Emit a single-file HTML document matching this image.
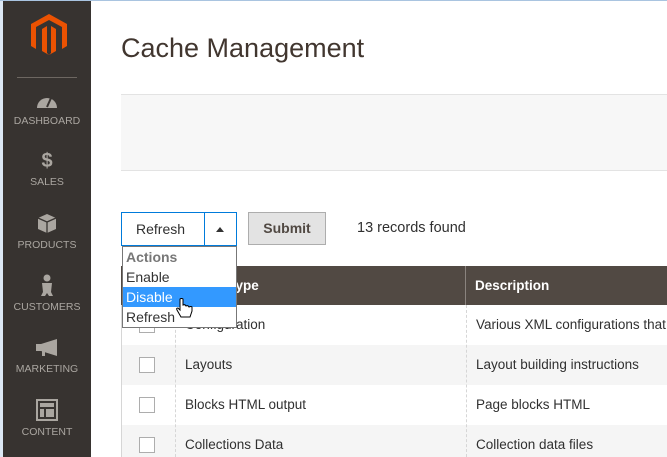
<!DOCTYPE html>
<html><head><meta charset="utf-8"><style>
*{margin:0;padding:0;box-sizing:border-box}
body{width:667px;height:457px;overflow:hidden;background:#fff;font-family:"Liberation Sans",sans-serif;position:relative}
.tl{position:absolute;left:0;top:0;width:667px;height:1px;background:#a9c4e0}
.lb{position:absolute;left:0;top:0;width:3px;height:457px;background:#dce8f4}
.sb{position:absolute;left:3px;top:0;width:88px;height:457px;background:#373330}
.it{position:absolute;left:0;width:88px;text-align:center;color:#aaa6a0;font-size:10.5px}
.it svg{display:block;margin:0 auto}
.t{position:absolute;left:121px;top:33px;font-size:27px;color:#41362f}
.band{position:absolute;left:121px;top:94px;width:546px;height:77px;background:#f7f7f7;border-top:1px solid #e3e3e3;border-bottom:1px solid #e3e3e3}
.sel{position:absolute;left:121px;top:212px;width:116px;height:34px;border:1px solid #007bdb;background:#fff}
.sel span{position:absolute;left:14px;top:8px;font-size:14px;color:#303030}
.sel i{position:absolute;left:82px;top:0;width:1px;height:32px;background:#007bdb}
.sel b{position:absolute;left:94px;top:14px;border:4px solid transparent;border-bottom:5px solid #333;border-top:0}
.btn{position:absolute;left:248px;top:212px;width:78px;height:33px;background:#e3e3e3;border:1px solid #adadad;font-size:14px;font-weight:bold;color:#514943;text-align:center;line-height:31px}
.rec{position:absolute;left:357px;top:220px;font-size:14.5px;color:#303030}
.th{position:absolute;left:121px;top:266px;width:546px;height:39px;background:#514943;color:#fff;font-weight:bold;font-size:13.5px}
.row{position:absolute;left:121px;width:546px;height:40px;font-size:13.5px;color:#303030;border-left:1px solid #d6d6d6}
.row .c{position:absolute;left:17px;top:12px;width:16px;height:16px;border:1px solid #adadad;background:#fff}
.row .a{position:absolute;left:63px;top:12px}
.row .d{position:absolute;left:354px;top:12px;white-space:nowrap}
.vd{position:absolute;left:175px;top:305px;height:152px;border-left:1px dashed #d6d6d6}
.vd2{position:absolute;left:466px;top:305px;height:152px;border-left:1px dashed #d6d6d6}
.dd{position:absolute;left:122px;top:246px;width:115px;height:82px;background:#fff;border:1px solid #777;font-size:14px;color:#333}
.dd div{height:20px;line-height:20px;padding-left:3px}
</style></head><body>
<div class="lb"></div>
<div class="sb">
 <svg style="position:absolute;left:28px;top:14px" width="36" height="42" viewBox="0 0 36 42"><path d="M18 0 L36 10 V32 L31 35 V13 L18 6 L5 13 V35 L0 32 V10 Z" fill="#eb5202"/><path d="M11 15 L16 12 V39 L18 41 L20 39 V12 L25 15 V37 L18 41 L11 37 Z" fill="#eb5202"/></svg>
 <div style="position:absolute;left:14px;top:77px;width:60px;height:1px;background:#6d6761"></div>
 <div class="it" style="top:94px"><svg width="22" height="14" viewBox="0 0 22 14"><path d="M1 14 A10 10 0 0 1 21 14 Z" fill="#aaa6a0"/><path d="M11 13 L15 4" stroke="#373330" stroke-width="2"/></svg><div style="margin-top:7px">DASHBOARD</div></div>
 <div class="it" style="top:150px"><div style="font-size:20px;font-weight:bold;line-height:22px">$</div><div style="margin-top:4px">SALES</div></div>
 <div class="it" style="top:214px"><svg width="18" height="19" viewBox="0 0 18 19"><path d="M9 0 L18 4 V15 L9 19 L0 15 V4 Z" fill="#aaa6a0"/><path d="M0 4 L9 8 L18 4 M9 8 V19" stroke="#373330" stroke-width="1.3" fill="none"/></svg><div style="margin-top:6px">PRODUCTS</div></div>
 <div class="it" style="top:274px"><svg width="12" height="22" viewBox="0 0 12 22"><circle cx="6" cy="4" r="3.5" fill="#aaa6a0"/><path d="M1 9 H11 L10 18 L12 22 H8 L6 19 L4 22 H0 L2 18 Z" fill="#aaa6a0"/></svg><div style="margin-top:5px">CUSTOMERS</div></div>
 <div class="it" style="top:339px"><svg width="22" height="17" viewBox="0 0 22 17"><path d="M0 5 H5 L21 0 V17 L5 12 H0 Z" fill="#aaa6a0"/><rect x="6" y="12" width="3" height="5" fill="#aaa6a0"/></svg><div style="margin-top:7px">MARKETING</div></div>
 <div class="it" style="top:399px"><svg width="22" height="22" viewBox="0 0 22 22"><rect x="1" y="1" width="20" height="20" fill="none" stroke="#aaa6a0" stroke-width="2"/><rect x="4" y="4" width="14" height="4" fill="#aaa6a0"/><rect x="4" y="10" width="4" height="8" fill="#aaa6a0"/><rect x="10" y="10" width="8" height="8" fill="#aaa6a0"/></svg><div style="margin-top:5px">CONTENT</div></div>
</div>
<div class="tl"></div>
<div class="t">Cache Management</div>
<div class="band"></div>
<div class="sel"><span>Refresh</span><i></i><b></b></div>
<div class="btn">Submit</div>
<div class="rec">13 records found</div>
<div class="th"><span style="position:absolute;left:63px;top:12px">Cache Type</span><span style="position:absolute;left:354px;top:12px">Description</span><div style="position:absolute;left:344px;top:0;width:1px;height:39px;background:#8a837e"></div></div>
<div class="row" style="top:305px;background:#fff"><div class="c"></div><div class="a">Configuration</div><div class="d">Various XML configurations that</div></div>
<div class="row" style="top:345px;background:#f5f5f5"><div class="c"></div><div class="a">Layouts</div><div class="d">Layout building instructions</div></div>
<div class="row" style="top:385px;background:#fff"><div class="c"></div><div class="a">Blocks HTML output</div><div class="d">Page blocks HTML</div></div>
<div class="row" style="top:425px;background:#f5f5f5;height:32px"><div class="c"></div><div class="a">Collections Data</div><div class="d">Collection data files</div></div>
<div class="vd"></div><div class="vd2"></div>
<div class="dd"><div style="color:#777;font-weight:bold">Actions</div><div>Enable</div><div style="background:#3399ff;color:#fff">Disable</div><div>Refresh</div></div>
<svg style="position:absolute;left:176px;top:298px" width="17" height="22" viewBox="0 0 17 22"><path d="M4 1 V12 L2 10 Q0 10 1 12 L5 19 H14 L16 13 V9 Q15 8 13 9 Q12 7 10 8 Q9 6 7 7 V1 Q5.5 0 4 1 Z" fill="#fff" stroke="#000" stroke-width="1"/></svg>
</body></html>
